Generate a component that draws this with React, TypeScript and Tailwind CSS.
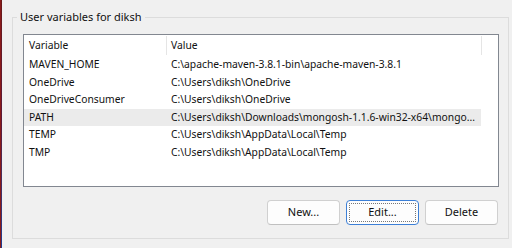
import React from "react";

const rows: [string, string][] = [
  ["MAVEN_HOME", "C:\\apache-maven-3.8.1-bin\\apache-maven-3.8.1"],
  ["OneDrive", "C:\\Users\\diksh\\OneDrive"],
  ["OneDriveConsumer", "C:\\Users\\diksh\\OneDrive"],
  ["PATH", "C:\\Users\\diksh\\Downloads\\mongosh-1.1.6-win32-x64\\mongo..."],
  ["TEMP", "C:\\Users\\diksh\\AppData\\Local\\Temp"],
  ["TMP", "C:\\Users\\diksh\\AppData\\Local\\Temp"],
];

export default function App() {
  return (
    <div
      className="w-[512px] h-[248px] bg-[#f0f0f0] flex overflow-hidden text-[10.3px] text-[#111]"
      style={{ fontFamily: '"Noto Sans", "Open Sans", sans-serif' }}
    >
      <div className="w-[1px] h-full bg-[#8a1a1a]" />
      <div className="w-[1px] h-full bg-gradient-to-b from-[#6a1818] via-[#5a1a3a] to-[#1d3c8f]" />
      <fieldset className="ml-[10px] mt-[9px] w-[497px] h-[230px] border border-[#dcdcdc] pl-[4px] pr-0 pb-0 pt-0 m-0 flex flex-col">
        <legend className="px-[3px] leading-[16px] text-[11px]">User variables for diksh</legend>
        <div className="ml-[6px] mt-[9px] w-[476px] h-[153px] bg-white border border-[#828790] flex flex-col">
          <div className="h-[21px] flex items-center">
            <div className="w-[142px] h-full flex items-center pl-[5px]">Variable</div>
            <div className="w-[1px] h-[19px] bg-[#e5e5e5]" />
            <div className="w-[314px] h-full flex items-center pl-[4px]">Value</div>
            <div className="w-[1px] h-[19px] bg-[#e5e5e5]" />
          </div>
          <div className="w-[457px] flex flex-col">
            {rows.map(([k, v]) => (
              <div
                key={k}
                className={
                  "h-[17.5px] flex items-center whitespace-nowrap " +
                  (k === "PATH" ? "bg-[#ebebeb]" : "")
                }
              >
                <div className="w-[143px] pl-[5px] overflow-hidden">{k}</div>
                <div className="w-[314px] pl-[4px] overflow-hidden">{v}</div>
              </div>
            ))}
          </div>
        </div>
        <div className="mt-[13px] mr-[10px] flex justify-end gap-[6px] text-[11px]">
          <button className="w-[73px] h-[25px] rounded-[4px] border border-[#d0d0d0] border-b-[#c0c0c0] bg-[#fdfdfd] flex items-center justify-center">
            New...
          </button>
          <button className="w-[73px] h-[25px] rounded-[4px] border border-[#3c7fd6] bg-[#fdfdfd] p-[2px] flex">
            <span className="flex-1 border border-dotted border-[#777] flex items-center justify-center">
              Edit...
            </span>
          </button>
          <button className="w-[73px] h-[25px] rounded-[4px] border border-[#d0d0d0] border-b-[#c0c0c0] bg-[#fdfdfd] flex items-center justify-center">
            Delete
          </button>
        </div>
      </fieldset>
    </div>
  );
}
